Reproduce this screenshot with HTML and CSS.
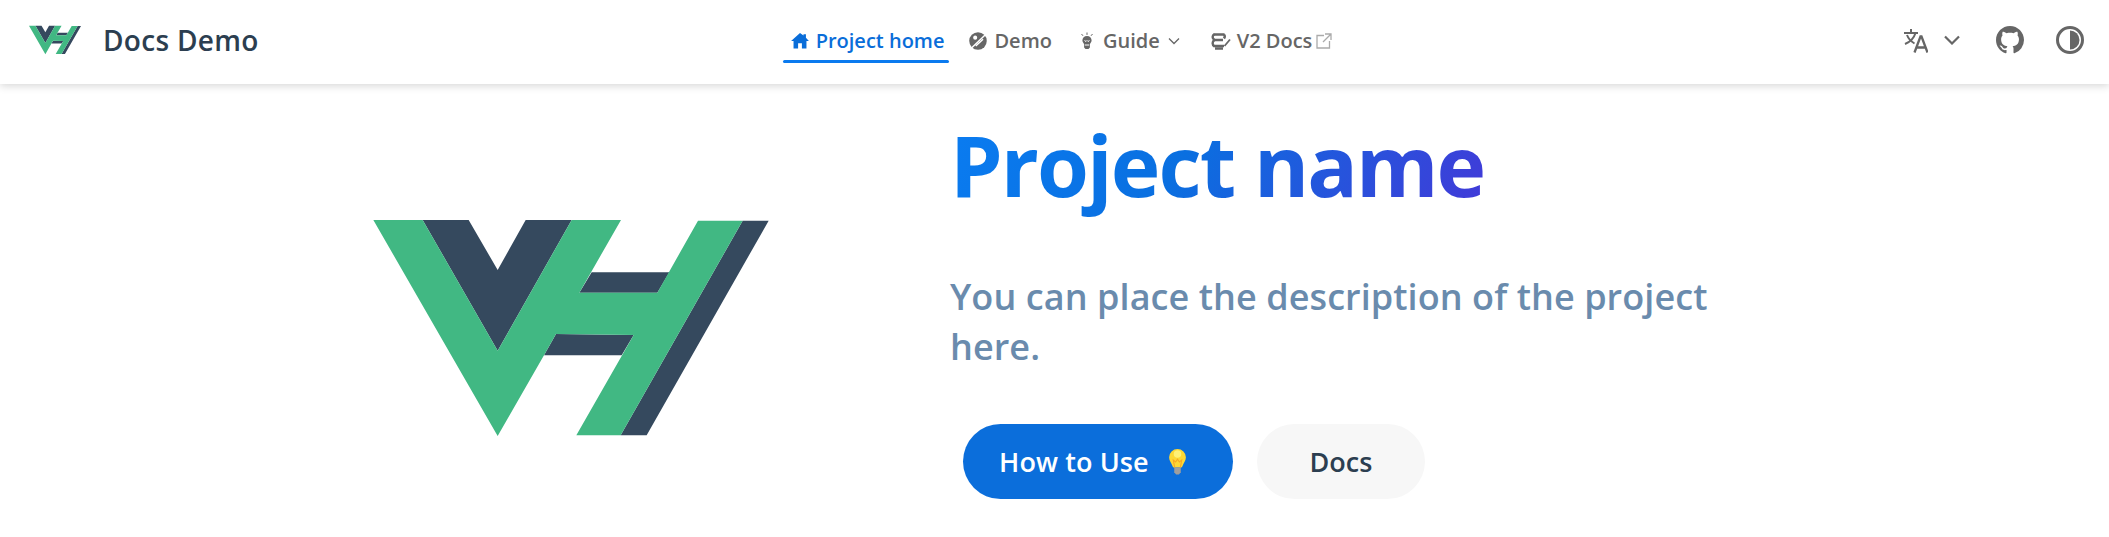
FILE: index.html
```html
<!DOCTYPE html>
<html lang="en">
<head>
<meta charset="utf-8">
<title>Docs Demo</title>
<link rel="stylesheet" href="styles.css">
</head>
<body>
<header class="navbar">
  <a class="brand" href="#">
    <svg class="brand-logo" viewBox="70 58 1186 648"><use href="#vh"/></svg>
    <span class="brand-name">Docs Demo</span>
  </a>
  <nav class="nav">
    <a class="nav-item active" href="#">
      <svg class="ic" viewBox="0.5 1 17 16"><path fill="currentColor" d="M9 1.500 .6 9h2.300v7.200h4.300v-5h3.600v5h4.300V9h2.300L14.600 6V2.600h-2.300v1.300z"/></svg>
      <span>Project home</span>
    </a>
    <a class="nav-item item-demo" href="#">
      <svg class="ic" viewBox="1 1 16 16"><circle cx="9" cy="9" r="7.800" fill="currentColor"/><path d="M3 15.500 16 3" stroke="#fff" stroke-width="1.300"/><circle cx="6.500" cy="6" r="1.800" fill="#fff"/><path d="M7 13.500 13.500 7.500" stroke="#fff" stroke-width="1.300"/></svg>
      <span>Demo</span>
    </a>
    <a class="nav-item item-guide" href="#">
      <svg class="ic ic-bulb" viewBox="0 0 14 18"><path fill="currentColor" d="M7 4c-2.800 0-4.600 2-4.600 4.300 0 1.700 1 2.700 1.700 3.700v3.500L5.500 17h3l1.400-1.500V12c.7-1 1.700-2 1.700-3.700C11.600 6 9.800 4 7 4z"/><path stroke="currentColor" stroke-width="1" d="M7 .5v2.400M1.500 2l1.500 1.800M12.500 2 11 3.800"/><path stroke="#fff" stroke-width="1" fill="none" d="M4.500 8.500l1.500 1 1-1 1 1 1.500-1M4.800 13h4.400"/></svg>
      <span>Guide</span>
      <svg class="chev" viewBox="0 0 12 8"><path d="M1 1.500 6 6.500 11 1.500" fill="none" stroke="currentColor" stroke-width="1.300"/></svg>
    </a>
    <a class="nav-item" href="#">
      <svg class="ic ic-stack" viewBox="0 0 20 18"><path fill="none" stroke="currentColor" stroke-width="2.400" d="M3 2.500h10.500M3 8h9M3 14h10"/><path fill="none" stroke="currentColor" stroke-width="2.400" d="M3.500 2c-2.500 1.500-2.500 4.500 0 6 -2.500 1.500-2.500 5 0 6.500M13 2.500c1 1 1 2.500 0 4M4 16.500h8"/><path fill="none" stroke="currentColor" stroke-width="1.800" d="M19 7.500 13.500 14"/></svg>
      <span>V2 Docs</span>
      <svg class="ext" viewBox="0 0 16 16"><path fill="none" stroke="#aaa" stroke-width="1.300" d="M8 2.500H1v12.500h12.500V8M9 1h6v6M15 1 7 9"/></svg>
    </a>
  </nav>
  <div class="tools">
    <button class="tool lang" type="button">
      <svg class="lang-ic" viewBox="0 0 24 25"><path fill="none" stroke="currentColor" stroke-width="2" d="M0 5h14M7 1v4M11.500 5C10 10 6 14 1 16M3 7c1.500 4 4 6.500 7.500 8.500"/><path fill="none" stroke="currentColor" stroke-width="2.300" d="M10.500 24.500 16.500 8.500h1L23.500 24.500M12.500 19.500h9"/></svg>
      <svg class="lang-chev" viewBox="0 0 16 10"><path d="M1 1.500 8 8.500 15 1.500" fill="none" stroke="currentColor" stroke-width="2.200"/></svg>
    </button>
    <a class="tool" href="#">
      <svg class="round-ic" viewBox="0 0 16 16"><path fill="currentColor" d="M8 0C3.580 0 0 3.580 0 8c0 3.540 2.290 6.530 5.470 7.590.4.070.55-.17.55-.38 0-.19-.01-.82-.01-1.490-2.010.37-2.530-.49-2.690-.94-.09-.23-.48-.94-.82-1.130-.28-.15-.68-.52-.01-.53.63-.01 1.080.58 1.230.82.72 1.210 1.870.87 2.330.66.070-.52.280-.87.510-1.070-1.780-.2-3.640-.89-3.640-3.950 0-.87.310-1.590.820-2.150-.08-.2-.36-1.020.080-2.120 0 0 .67-.21 2.200.82.640-.18 1.320-.27 2-.27s1.360.09 2 .27c1.530-1.040 2.200-.82 2.200-.82.440 1.100.160 1.920.080 2.120.510.560.820 1.270.820 2.150 0 3.070-1.870 3.750-3.650 3.950.290.250.540.730.540 1.480 0 1.070-.01 1.930-.01 2.200 0 .210.150.460.550.380A8.013 8.013 0 0 0 16 8c0-4.420-3.580-8-8-8z"/></svg>
    </a>
    <button class="tool" type="button">
      <svg class="round-ic" viewBox="0 0 28 28"><circle cx="14" cy="14" r="12.500" fill="none" stroke="currentColor" stroke-width="3"/><path fill="currentColor" d="M14 4.500a9.500 9.500 0 0 1 0 19z"/></svg>
    </button>
  </div>
</header>
<main class="hero">
  <svg class="hero-logo" viewBox="70 58 1186 648">
    <defs>
      <g id="vh">
        <path fill="#35495e" d="M218 58h138l87 150 84-150h138L443 450zM725 215h233l-36 61H688zM618 400l233 3-36 61H582zM1178 60h78L890 704h-78z"/>
        <path fill="#41b883" d="M70 58h148l225 392L665 58h148L688 276h234L1044 60h134L812 704H679l172-301-233-3-36 64-139 242z"/>
      </g>
    </defs>
    <use href="#vh"/>
  </svg>
  <div class="info">
    <h1 class="title">Project name</h1>
    <p class="desc">You can place the description of the project here.</p>
    <div class="actions">
      <a class="btn primary" href="#"><span>How to Use</span><svg class="bulb" viewBox="0 0 20 30"><path fill="#fdd835" d="M10 1a9 9 0 0 0-9 9c0 4 2.500 6 3.500 9 .4 1.200 1 2 2 2h7c1 0 1.600-.8 2-2 1-3 3.500-5 3.500-9a9 9 0 0 0-9-9z"/><circle cx="10" cy="6.500" r="4" fill="#fff176"/><path fill="none" stroke="#f9a825" stroke-width="1.200" d="M7 21l-1.500-8 2.500 2 2-3 2 3 2.500-2L13 21"/><path fill="#9e9e9e" d="M6.500 21h7v5l-2 2.500h-3l-2-2.500z"/></svg></a>
      <a class="btn secondary" href="#">Docs</a>
    </div>
  </div>
</main>
</body>
</html>
```
FILE: styles.css
```css
* { box-sizing: border-box; }
html, body { margin: 0; padding: 0; background: #fff; }
body { font-family: "Open Sans", "Noto Sans", sans-serif; color: #2c3e50; height: 537px; overflow: hidden; }
a { text-decoration: none; color: inherit; }
button { background: none; border: 0; padding: 0; font: inherit; color: inherit; }

.navbar {
  display: grid;
  grid-template-columns: 1fr auto 1fr;
  align-items: center;
  height: 84px;
  padding: 0 25px 0 29px;
  background: #fff;
  box-shadow: 0 2px 8px rgba(0, 0, 0, .16);
  position: relative;
}
.brand { display: flex; align-items: center; gap: 22px; }
.brand-logo { width: 52px; height: 30px; display: block; margin-top: -4px; }
.brand-name { font-size: 28px; font-weight: 600; letter-spacing: .3px; margin-top: -4px; }

.nav { display: flex; align-items: center; gap: 14px; height: 100%; margin-left: 7px; }
.nav-item {
  display: flex;
  align-items: center;
  height: 40px;
  margin-top: -3px;
  padding: 0 5px 0 8px;
  font-size: 20px;
  font-weight: 600;
  color: #666;
  position: relative;
}
.item-demo { padding-left: 6px; }
.item-guide { padding-left: 9px; }
.nav-item.active { color: #096dd9; }
.nav-item.active::after {
  content: "";
  position: absolute;
  left: 0;
  right: 0;
  bottom: -2px;
  height: 3px;
  border-radius: 2px;
  background: #0a7aef;
}
.ic { width: 18px; height: 18px; margin-right: 7px; flex: none; }
.ic-bulb { width: 14px; margin-right: 9px; }
.ic-stack { width: 20px; margin-left: 4px; margin-right: 6px; }
.chev { width: 12px; height: 8px; margin-left: 8px; }
.ext { width: 16px; height: 16px; margin-left: 4px; }

.tools { display: flex; align-items: center; justify-content: flex-end; gap: 32px; color: #666; margin-top: -4px; }
.tool { display: flex; align-items: center; }
.lang { gap: 16px; margin-right: 4px; }
.lang-ic { width: 24px; height: 25px; }
.lang-chev { width: 16px; height: 10px; }
.round-ic { width: 28px; height: 28px; display: block; }

.hero { display: flex; align-items: flex-start; padding-left: 373px; }
.hero-logo { width: 396px; height: 216px; flex: none; margin-top: 136px; }
.info { width: 770px; margin-left: 181px; }
.title {
  margin: 0;
  font-size: 84px;
  line-height: 116px;
  font-weight: 700;
  letter-spacing: -1.950px;
  padding-top: 23px;
  display: inline-block;
  background: linear-gradient(120deg, #0a7df2 0%, #0a6fe0 45%, #4338d8 100%);
  -webkit-background-clip: text;
  background-clip: text;
  color: transparent;
}
.desc {
  margin: 49px 0 0;
  font-size: 36px;
  line-height: 50px;
  font-weight: 600;
  color: #6a8bad;
  letter-spacing: .07px;
}
.actions { display: flex; gap: 24px; margin: 52px 0 0 13px; }
.btn {
  display: flex;
  align-items: center;
  justify-content: center;
  height: 75px;
  border-radius: 38px;
  font-size: 27px;
  font-weight: 600;
  letter-spacing: .1px;
}
.primary { width: 270px; background: #0b6edb; color: #fff; gap: 19px; justify-content: flex-start; padding-left: 36px; }
.secondary { width: 168px; background: #f7f7f7; color: #2c3e50; }
.bulb { width: 19px; height: 28px; }
```
